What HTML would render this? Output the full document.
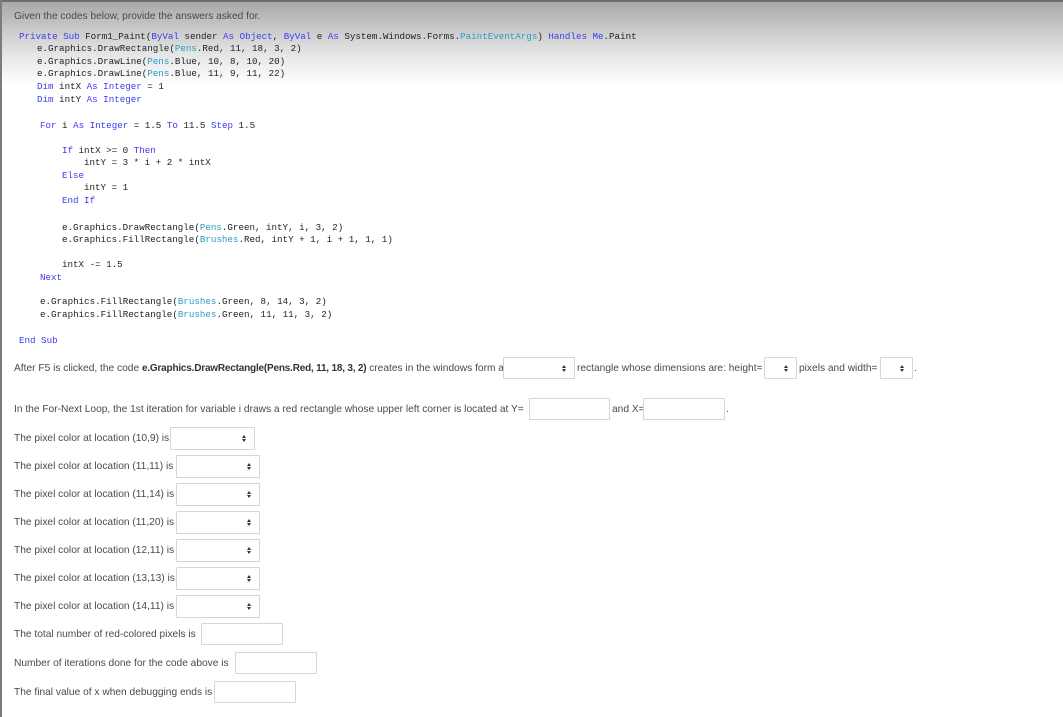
<!DOCTYPE html>
<html><head><meta charset="utf-8"><style>
body{margin:0;width:1063px;height:717px;position:relative;overflow:hidden;background:#fff;font-family:"Liberation Sans",sans-serif;}
.grad{position:absolute;left:0;top:0;width:1063px;height:90px;background:linear-gradient(#a6a6a6 0px,#c4c4c4 25px,#e6e6e6 55px,#fff 85px);}
.topb{position:absolute;left:0;top:0;width:1063px;height:2px;background:#6a6e72;}
.leftb{position:absolute;left:0;top:0;width:2px;height:717px;background:#7a7d80;}
.c{position:absolute;font-family:"Liberation Mono",monospace;font-size:9.2px;white-space:pre;color:#222;line-height:12px;}
.k{color:#3c3cf0}.t{color:#2b9dc0}
.tx{position:absolute;font-size:10.2px;color:#4a4a4a;white-space:nowrap;line-height:12px;margin-top:1px;}
.b{font-weight:bold;color:#333;font-size:10px;letter-spacing:-0.2px}
.sel,.inp{position:absolute;border:1px solid #d6d6d6;background:#fff;box-sizing:border-box;border-radius:1px;}
.sel::after{content:"";position:absolute;right:8px;top:50%;width:0;height:0;border-left:2.5px solid transparent;border-right:2.5px solid transparent;border-bottom:3px solid #333;margin-top:-3.5px;}
.sel::before{content:"";position:absolute;right:8px;top:50%;width:0;height:0;border-left:2.5px solid transparent;border-right:2.5px solid transparent;border-top:3px solid #333;margin-top:0.5px;}
</style></head><body>
<div class="grad"></div><div class="topb"></div><div class="leftb"></div>
<div class="tx" style="left:14px;top:10px">Given the codes below, provide the answers asked for.</div>

<div class="c" style="left:19px;top:31px"><span class="k">Private Sub</span> Form1_Paint(<span class="k">ByVal</span> sender <span class="k">As Object</span>, <span class="k">ByVal</span> e <span class="k">As</span> System.Windows.Forms.<span class="t">PaintEventArgs</span>) <span class="k">Handles Me</span>.Paint</div>
<div class="c" style="left:37px;top:43px">e.Graphics.DrawRectangle(<span class="t">Pens</span>.Red, 11, 18, 3, 2)</div>
<div class="c" style="left:37px;top:56px">e.Graphics.DrawLine(<span class="t">Pens</span>.Blue, 10, 8, 10, 20)</div>
<div class="c" style="left:37px;top:68px">e.Graphics.DrawLine(<span class="t">Pens</span>.Blue, 11, 9, 11, 22)</div>
<div class="c" style="left:37px;top:81px"><span class="k">Dim</span> intX <span class="k">As Integer</span> = 1</div>
<div class="c" style="left:37px;top:94px"><span class="k">Dim</span> intY <span class="k">As Integer</span></div>
<div class="c" style="left:40px;top:120px"><span class="k">For</span> i <span class="k">As Integer</span> = 1.5 <span class="k">To</span> 11.5 <span class="k">Step</span> 1.5</div>
<div class="c" style="left:62px;top:145px"><span class="k">If</span> intX &gt;= 0 <span class="k">Then</span></div>
<div class="c" style="left:84px;top:157px">intY = 3 * i + 2 * intX</div>
<div class="c" style="left:62px;top:170px"><span class="k">Else</span></div>
<div class="c" style="left:84px;top:182px">intY = 1</div>
<div class="c" style="left:62px;top:195px"><span class="k">End If</span></div>
<div class="c" style="left:62px;top:222px">e.Graphics.DrawRectangle(<span class="t">Pens</span>.Green, intY, i, 3, 2)</div>
<div class="c" style="left:62px;top:234px">e.Graphics.FillRectangle(<span class="t">Brushes</span>.Red, intY + 1, i + 1, 1, 1)</div>
<div class="c" style="left:62px;top:259px">intX -= 1.5</div>
<div class="c" style="left:40px;top:272px"><span class="k">Next</span></div>
<div class="c" style="left:40px;top:296px">e.Graphics.FillRectangle(<span class="t">Brushes</span>.Green, 8, 14, 3, 2)</div>
<div class="c" style="left:40px;top:309px">e.Graphics.FillRectangle(<span class="t">Brushes</span>.Green, 11, 11, 3, 2)</div>
<div class="c" style="left:19px;top:335px"><span class="k">End Sub</span></div>

<div class="tx" style="left:14px;top:362px">After F5 is clicked, the code <span class="b">e.Graphics.DrawRectangle(Pens.Red, 11, 18, 3, 2)</span> creates in the windows form a</div>
<div class="sel" style="left:503px;top:357px;width:72px;height:22px"></div>
<div class="tx" style="left:577px;top:362px">rectangle whose dimensions are: height=</div>
<div class="sel" style="left:764px;top:357px;width:33px;height:22px"></div>
<div class="tx" style="left:799px;top:362px">pixels and width=</div>
<div class="sel" style="left:880px;top:357px;width:33px;height:22px"></div>
<div class="tx" style="left:914px;top:362px">.</div>

<div class="tx" style="left:14px;top:403px">In the For-Next Loop, the 1st iteration for variable i draws a red rectangle whose upper left corner is located at Y=</div>
<div class="inp" style="left:529px;top:398px;width:81px;height:22px"></div>
<div class="tx" style="left:612px;top:403px">and X=</div>
<div class="inp" style="left:643px;top:398px;width:82px;height:22px"></div>
<div class="tx" style="left:726px;top:403px">.</div>

<div class="tx" style="left:14px;top:432px">The pixel color at location (10,9) is</div>
<div class="sel" style="left:170px;top:427px;width:85px;height:23px"></div>
<div class="tx" style="left:14px;top:460px">The pixel color at location (11,11) is</div>
<div class="sel" style="left:176px;top:455px;width:84px;height:23px"></div>
<div class="tx" style="left:14px;top:488px">The pixel color at location (11,14) is</div>
<div class="sel" style="left:176px;top:483px;width:84px;height:23px"></div>
<div class="tx" style="left:14px;top:516px">The pixel color at location (11,20) is</div>
<div class="sel" style="left:176px;top:511px;width:84px;height:23px"></div>
<div class="tx" style="left:14px;top:544px">The pixel color at location (12,11) is</div>
<div class="sel" style="left:176px;top:539px;width:84px;height:23px"></div>
<div class="tx" style="left:14px;top:572px">The pixel color at location (13,13) is</div>
<div class="sel" style="left:176px;top:567px;width:84px;height:23px"></div>
<div class="tx" style="left:14px;top:600px">The pixel color at location (14,11) is</div>
<div class="sel" style="left:176px;top:595px;width:84px;height:23px"></div>

<div class="tx" style="left:14px;top:628px">The total number of red-colored pixels is</div>
<div class="inp" style="left:201px;top:623px;width:82px;height:22px"></div>
<div class="tx" style="left:14px;top:657px">Number of iterations done for the code above is</div>
<div class="inp" style="left:235px;top:652px;width:82px;height:22px"></div>
<div class="tx" style="left:14px;top:686px">The final value of x when debugging ends is</div>
<div class="inp" style="left:214px;top:681px;width:82px;height:22px"></div>
</body></html>
